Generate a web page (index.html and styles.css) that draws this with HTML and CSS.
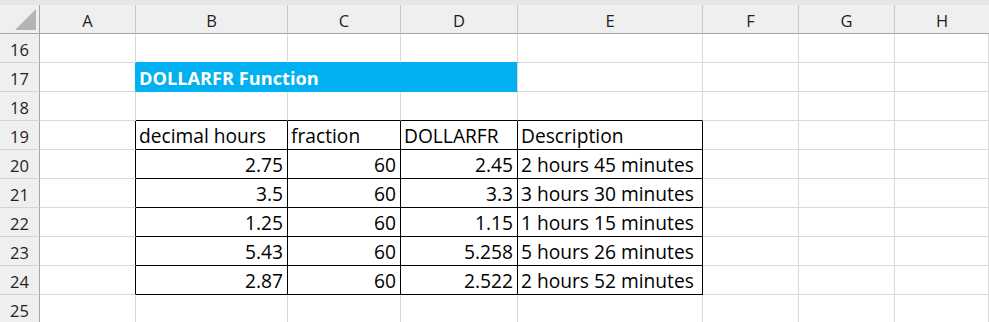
FILE: index.html
```html
<!DOCTYPE html>
<html>
<head>
<meta charset="utf-8">
<link rel="stylesheet" href="styles.css">
</head>
<body>
<div class="band"></div>
<div class="sheet">
  <div class="corner"><svg width="39" height="28" viewBox="0 0 39 28"><polygon points="36,4 36,25 15,25" fill="#b4b4b4"/></svg></div>
  <div class="colhead">A</div><div class="colhead">B</div><div class="colhead">C</div><div class="colhead">D</div><div class="colhead">E</div><div class="colhead">F</div><div class="colhead">G</div><div class="colhead last">H</div>

  <div class="rowhead">16</div><div class="c"></div><div class="c blue-b"></div><div class="c blue-b"></div><div class="c blue-b"></div><div class="c"></div><div class="c"></div><div class="c"></div><div class="c"></div>

  <div class="rowhead">17</div><div class="c blue-r"></div><div class="c title">DOLLARFR Function</div><div class="c"></div><div class="c"></div><div class="c"></div><div class="c"></div>

  <div class="rowhead">18</div><div class="c"></div><div class="c bk-b"></div><div class="c bk-b"></div><div class="c bk-b"></div><div class="c bk-b"></div><div class="c"></div><div class="c"></div><div class="c"></div>

  <div class="rowhead">19</div><div class="c bk-r"></div><div class="c bk">decimal hours</div><div class="c bk">fraction</div><div class="c bk">DOLLARFR</div><div class="c bk">Description</div><div class="c"></div><div class="c"></div><div class="c"></div>

  <div class="rowhead">20</div><div class="c bk-r"></div><div class="c bk num">2.75</div><div class="c bk num">60</div><div class="c bk num">2.45</div><div class="c bk">2 hours 45 minutes</div><div class="c"></div><div class="c"></div><div class="c"></div>

  <div class="rowhead">21</div><div class="c bk-r"></div><div class="c bk num">3.5</div><div class="c bk num">60</div><div class="c bk num">3.3</div><div class="c bk">3 hours 30 minutes</div><div class="c"></div><div class="c"></div><div class="c"></div>

  <div class="rowhead">22</div><div class="c bk-r"></div><div class="c bk num">1.25</div><div class="c bk num">60</div><div class="c bk num">1.15</div><div class="c bk">1 hours 15 minutes</div><div class="c"></div><div class="c"></div><div class="c"></div>

  <div class="rowhead">23</div><div class="c bk-r"></div><div class="c bk num">5.43</div><div class="c bk num">60</div><div class="c bk num">5.258</div><div class="c bk">5 hours 26 minutes</div><div class="c"></div><div class="c"></div><div class="c"></div>

  <div class="rowhead">24</div><div class="c bk-r"></div><div class="c bk num">2.87</div><div class="c bk num">60</div><div class="c bk num">2.522</div><div class="c bk">2 hours 52 minutes</div><div class="c"></div><div class="c"></div><div class="c"></div>

  <div class="rowhead">25</div><div class="c"></div><div class="c"></div><div class="c"></div><div class="c"></div><div class="c"></div><div class="c"></div><div class="c"></div><div class="c"></div>
</div>
</body>
</html>
```

FILE: styles.css
```css
html, body {
  margin: 0;
  padding: 0;
  background: #ffffff;
  overflow: hidden;
}

.band {
  height: 5px;
  background: #e4e6ea;
}

.sheet {
  display: grid;
  grid-template-columns: 40px 96px 152px 113px 117px 185px 96px 96px 1fr;
  grid-auto-rows: 29px;
  height: 317px;
  overflow: hidden;
}

.sheet > div {
  box-sizing: border-box;
  border-right: 1px solid #d9d9d9;
  border-bottom: 1px solid #d9d9d9;
  white-space: nowrap;
  overflow: hidden;
}

.corner {
  background: #efefef;
  border-right-color: #a6a6a6 !important;
  border-bottom-color: #a6a6a6 !important;
}

.corner svg {
  display: block;
}

.colhead {
  background: #efefef;
  border-right-color: #c9c9c9 !important;
  border-bottom-color: #a6a6a6 !important;
  font-family: "Open Sans", "Noto Sans", sans-serif;
  font-size: 16.5px;
  color: #1f1f1f;
  text-align: center;
  line-height: 28px;
  padding-top: 2px;
}

.colhead.last {
  border-right: none !important;
}

.rowhead {
  background: #efefef;
  border-right-color: #a6a6a6 !important;
  border-bottom-color: #d4d4d4 !important;
  font-family: "Open Sans", "Noto Sans", sans-serif;
  font-size: 16.5px;
  color: #1f1f1f;
  text-align: center;
  line-height: 28px;
  padding-top: 2px;
}

.c {
  font-family: "Open Sans", "Noto Sans", sans-serif;
  font-size: 19.2px;
  color: #000000;
  line-height: 28px;
  padding: 1px 4px 0 3px;
}

.num {
  text-align: right;
}

.bk {
  border-right-color: #000000 !important;
  border-bottom-color: #000000 !important;
}

.bk-r {
  border-right-color: #000000 !important;
}

.bk-b {
  border-bottom-color: #000000 !important;
}

.blue-r {
  border-right-color: #00b0f0 !important;
}

.blue-b {
  border-bottom-color: #00b0f0 !important;
}

.title {
  grid-column: span 3;
  background: #00b0f0;
  border-bottom-color: #00b0f0 !important;
  color: #ffffff;
  font-weight: 700;
  font-size: 18.2px;
}
```
